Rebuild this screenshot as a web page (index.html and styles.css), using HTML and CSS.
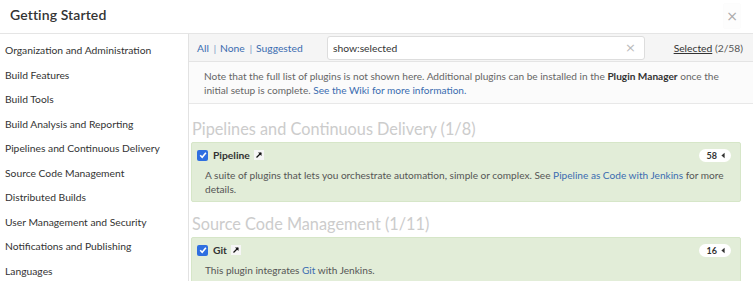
FILE: index.html
```html
<!DOCTYPE html>
<html>
<head>
<meta charset="utf-8">
<link rel="stylesheet" href="styles.css">
</head>
<body>
<div class="dialog">
  <header class="header">
    <h1 class="title">Getting Started</h1>
    <button class="close">×</button>
  </header>
  <div class="main">
    <ul class="sidebar">
      <li>Organization and Administration</li>
      <li>Build Features</li>
      <li>Build Tools</li>
      <li>Build Analysis and Reporting</li>
      <li>Pipelines and Continuous Delivery</li>
      <li>Source Code Management</li>
      <li>Distributed Builds</li>
      <li>User Management and Security</li>
      <li>Notifications and Publishing</li>
      <li>Languages</li>
    </ul>
    <div class="content">
      <div class="toolbar">
        <div class="filters"><a>All</a><span class="sep">|</span><a>None</a><span class="sep">|</span><a>Suggested</a></div>
        <div class="search"><span>show:selected</span><span class="clear">×</span></div>
        <div class="selected"><u>Selected</u> (2/58)</div>
      </div>
      <div class="note">Note that the full list of plugins is not shown here. Additional plugins can be installed in the <b>Plugin Manager</b> once the initial setup is complete. <a>See the Wiki for more information.</a></div>
      <div class="plugins">
        <h2 class="cat">Pipelines and Continuous Delivery (1/8)</h2>
        <div class="card">
          <div class="card-top">
            <label class="name"><span class="check"><svg viewBox="0 0 10 10" width="10" height="10"><path d="M2.2 5.2 L4.2 7.2 L7.9 2.8" fill="none" stroke="#fff" stroke-width="1.6"/></svg></span>Pipeline<span class="ext"><svg viewBox="0 0 8 8" width="8" height="8"><path d="M1.5 6.5 L6 2" stroke="#111" stroke-width="1.3"/><path d="M3 1.5 H6.5 V5 Z" fill="#111"/></svg></span></label>
            <span class="badge">58<svg viewBox="0 0 5 8" width="4" height="7"><path d="M4.5 0.5 V7.5 L0.5 4 Z" fill="#333"/></svg></span>
          </div>
          <p class="desc">A suite of plugins that lets you orchestrate automation, simple or complex. See <a>Pipeline as Code with Jenkins</a> for more details.</p>
        </div>
        <h2 class="cat">Source Code Management (1/11)</h2>
        <div class="card">
          <div class="card-top">
            <label class="name"><span class="check"><svg viewBox="0 0 10 10" width="10" height="10"><path d="M2.2 5.2 L4.2 7.2 L7.9 2.8" fill="none" stroke="#fff" stroke-width="1.6"/></svg></span>Git<span class="ext"><svg viewBox="0 0 8 8" width="8" height="8"><path d="M1.5 6.5 L6 2" stroke="#111" stroke-width="1.3"/><path d="M3 1.5 H6.5 V5 Z" fill="#111"/></svg></span></label>
            <span class="badge">16<svg viewBox="0 0 5 8" width="4" height="7"><path d="M4.5 0.5 V7.5 L0.5 4 Z" fill="#333"/></svg></span>
          </div>
          <p class="desc">This plugin integrates <a>Git</a> with Jenkins.</p>
        </div>
      </div>
    </div>
  </div>
</div>
</body>
</html>
```

FILE: styles.css
```css
* { box-sizing: border-box; }
html, body { margin: 0; padding: 0; background: #fff; }
body {
  font-family: "Lato", "Open Sans", sans-serif;
  font-size: 10.3px;
  color: #333;
  width: 753px;
  height: 281px;
  overflow: hidden;
}
a { color: #3a6cb0; text-decoration: none; }
.header {
  height: 34px;
  border-bottom: 1px solid #e5e5e5;
  display: flex;
  align-items: center;
  justify-content: space-between;
  padding: 0 13px 0 10px;
}
.title {
  margin: 0 0 5px 0;
  font-size: 14px;
  font-weight: 600;
  color: #333;
  letter-spacing: 0.1px;
}
.close {
  border: none;
  background: #fdfdfd;
  color: #aaa;
  font-size: 14px;
  padding: 4px 2px;
  margin-bottom: 2px;
  font-family: "DejaVu Sans", sans-serif;
  box-shadow: 0 0 1px #eee;
}
.main {
  display: grid;
  grid-template-columns: 189px 1fr;
  height: 247px;
}
.sidebar {
  list-style: none;
  margin: 0;
  padding: 4px 0 0 5px;
  border-right: 1px solid #e2e2e2;
}
.sidebar li {
  height: 24.5px;
  line-height: 25px;
  white-space: nowrap;
  color: #333;
}
.content { min-width: 0; }
.toolbar {
  height: 28px;
  background: #f5f5f5;
  border-bottom: 1px solid #e4e4e4;
  display: flex;
  align-items: center;
  padding: 0 10px 0 8px;
}
.filters { width: 130px; color: #3a6cb0; }
.sep { color: #6a8cc0; margin: 0 4px 0 5px; font-size: 9px; }
.search {
  width: 318px;
  height: 24px;
  background: #fff;
  border: 1px solid #ddd;
  border-radius: 3px;
  display: flex;
  align-items: center;
  justify-content: space-between;
  padding: 0 8px 0 5px;
  color: #333;
}
.clear { color: #bbb; font-size: 13px; font-family: "DejaVu Sans", sans-serif; }
.selected { margin-left: auto; color: #555; }
.selected u { color: #333; }
.note {
  background: #fbfbfb;
  border-bottom: 1px solid #e8e8e8;
  padding: 7px 20px 6px 15px;
  font-size: 10.1px;
  line-height: 14px;
  color: #666;
  height: 42px;
}
.note b { color: #333; }
.plugins { padding: 0 12px 0 2px; }
.cat {
  margin: 14px 0 2px 1px;
  font-size: 16.3px;
  font-weight: 400;
  color: #ccc;
  line-height: 22px;
  white-space: nowrap;
}
.card + .cat { margin-top: 11px; }
.card {
  background: #e2edd8;
  border: 1px solid #d6e6c8;
  border-radius: 2px;
  padding: 5px 4px 5px 5px;
}
.card-top {
  display: flex;
  align-items: center;
  justify-content: space-between;
  height: 14px;
  padding-right: 5px;
}
.name {
  display: flex;
  align-items: center;
  font-weight: 700;
  color: #333;
}
.check {
  width: 11px;
  height: 11px;
  background: #2f6fe0;
  border-radius: 2px;
  display: inline-flex;
  align-items: center;
  justify-content: center;
  margin-right: 5px;
}
.ext {
  display: inline-flex;
  background: #f6f6f6;
  margin-left: 4px;
  padding: 1px;
}
.badge {
  display: inline-flex;
  align-items: center;
  gap: 4px;
  background: #fff;
  border-radius: 7px;
  padding: 0 6px 0 8px;
  height: 13px;
  font-size: 9px;
  font-weight: 700;
  color: #333;
}
.desc {
  margin: 6px 0 0 8px;
  font-size: 10.1px;
  line-height: 14px;
  color: #555;
}
```
